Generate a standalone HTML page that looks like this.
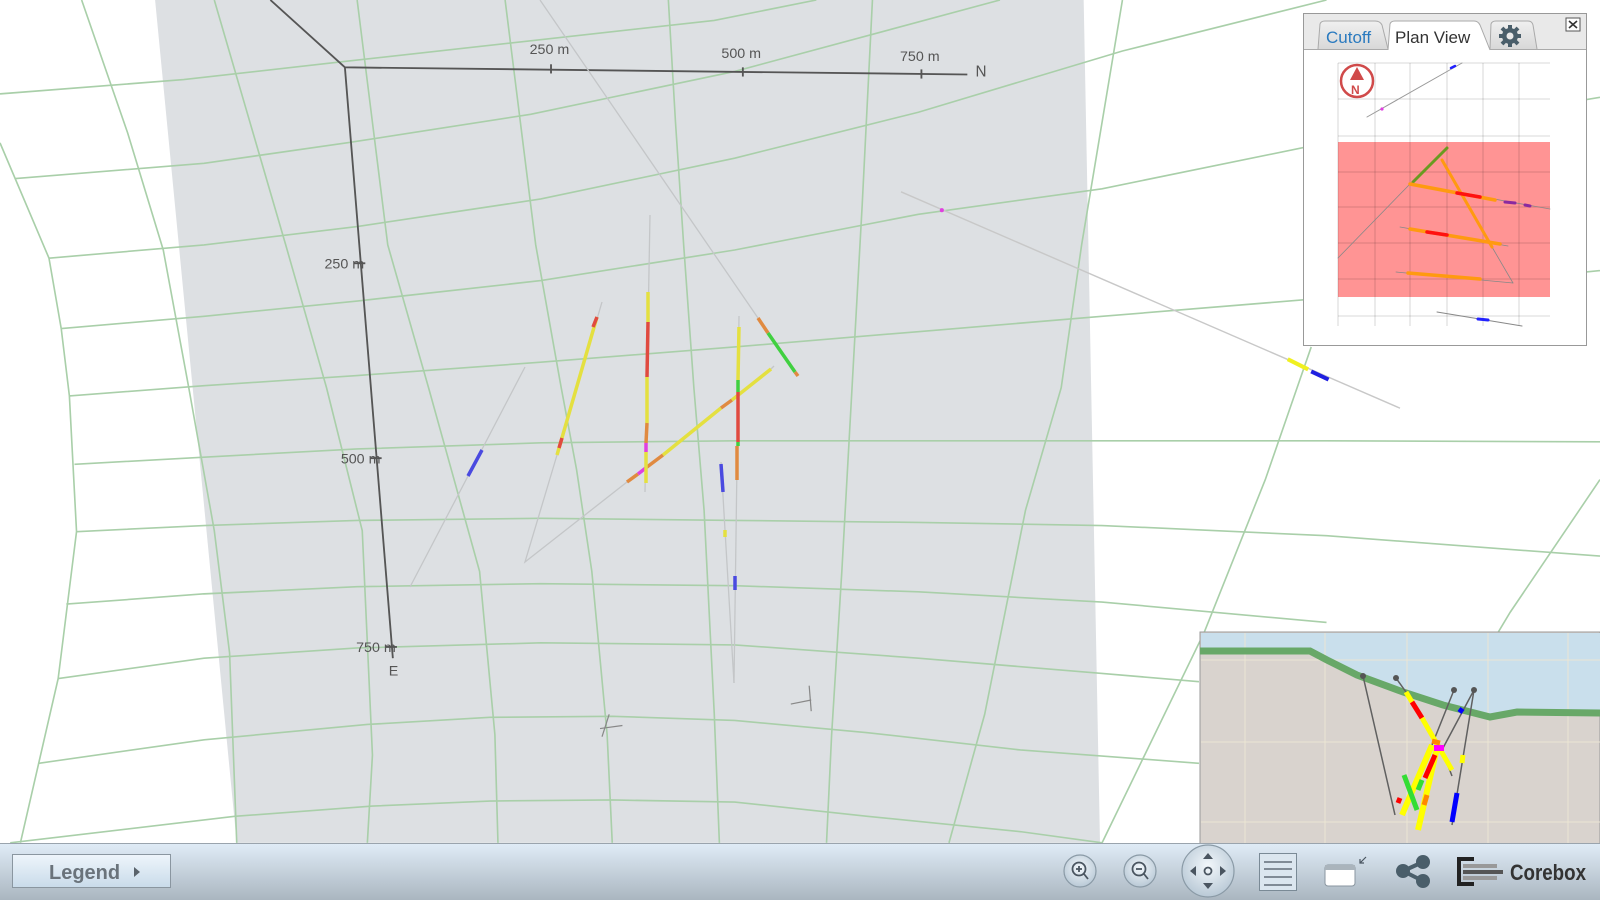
<!DOCTYPE html>
<html><head><meta charset="utf-8"><style>
html,body{margin:0;padding:0;width:1600px;height:900px;overflow:hidden;background:#fff}
svg{display:block}
text{font-family:"Liberation Sans",sans-serif}
</style></head><body>
<svg width="1600" height="900" viewBox="0 0 1600 900" xmlns="http://www.w3.org/2000/svg">
<defs>
<linearGradient id="tb" x1="0" y1="0" x2="0" y2="1"><stop offset="0" stop-color="#e0ecf7"/><stop offset="1" stop-color="#aab6c0"/></linearGradient>
<linearGradient id="btn" x1="0" y1="0" x2="0" y2="1"><stop offset="0" stop-color="#eef5fb"/><stop offset="1" stop-color="#c9dbea"/></linearGradient>
<radialGradient id="cb" cx="0.5" cy="0.4" r="0.6"><stop offset="0" stop-color="#f2f7fb"/><stop offset="1" stop-color="#b9c9d6"/></radialGradient>
<linearGradient id="tab" x1="0" y1="0" x2="0" y2="1"><stop offset="0" stop-color="#f0f0f0"/><stop offset="1" stop-color="#d8d8d8"/></linearGradient>
</defs>
<g transform="scale(1.0204)">
<polygon points="152,0 1062,0 1078,826 232,826" fill="#dde0e3"/>
<g fill="none" stroke="#a9cfa9" stroke-width="1.6">
<polyline points="0,92 180,78 340,60 520,40 700,20 800,0"/>
<polyline points="15,175 200,160 340,140 520,112 720,70 980,0"/>
<polyline points="48,253 200,240 350,222 530,195 720,155 900,110 1100,50 1300,0"/>
<polyline points="60,322 200,310 350,295 530,275 720,245 900,210 1080,185 1300,140 1600,90"/>
<polyline points="68,388 200,378 350,368 530,355 720,340 900,325 1080,310 1300,292 1600,262"/>
<polyline points="73,455 200,448 350,440 530,434 720,432 900,432 1080,432 1300,432 1568,433"/>
<polyline points="75,521 200,515 350,510 530,508 720,510 900,512 1080,515 1300,525 1568,545"/>
<polyline points="65,592 200,582 350,575 530,572 720,574 900,580 1080,590 1300,610"/>
<polyline points="57,665 200,645 350,635 530,630 720,632 900,645 1080,660 1175,668"/>
<polyline points="38,748 200,725 360,710 480,703 600,702 720,706 850,718 1000,735 1175,748"/>
<polyline points="10,826 230,800 365,790 480,785 600,784 720,786 850,800 1000,815 1080,826"/>
<polyline points="0,140 48,253 60,322 68,388 75,521 57,665 20,826"/>
<polyline points="80,0 125,130 160,245 185,380 210,520 225,640 232,826"/>
<polyline points="210,0 245,120 280,240 320,380 355,520 365,740 360,826"/>
<polyline points="350,0 365,120 380,240 420,380 445,470 470,560 485,720 488,826"/>
<polyline points="495,0 510,120 525,240 550,380 565,460 580,560 595,720 600,826"/>
<polyline points="655,0 662,120 670,240 680,380 690,500 700,700 705,826"/>
<polyline points="855,0 850,100 845,200 835,380 825,560 815,720 810,826"/>
<polyline points="1100,0 1080,120 1060,240 1040,380 1005,500 965,700 930,826"/>
<polyline points="1285,340 1240,470 1180,620 1080,826"/>
<polyline points="1568,470 1480,600 1420,700"/>
</g>
<g stroke="#555" stroke-width="1.8" fill="none">
<polyline points="265,0 338,66 948,73"/>
<polyline points="338,66 385,645"/>
<line x1="540" y1="63" x2="540" y2="72"/><line x1="728" y1="66" x2="728" y2="75"/><line x1="903" y1="68" x2="903" y2="77"/>
<line x1="347" y1="258" x2="358" y2="258"/><line x1="363" y1="449" x2="374" y2="449"/><line x1="378" y1="634" x2="389" y2="634"/>
</g>
<g fill="#555" font-size="14">
<text x="519" y="53">250 m</text><text x="707" y="57">500 m</text><text x="882" y="60">750 m</text>
<text x="956" y="75" font-size="15">N</text>
<text x="318" y="263">250 m</text><text x="334" y="454">500 m</text><text x="349" y="639">750 m</text>
<text x="381" y="662">E</text>
</g>
<g stroke="#888" stroke-width="1.2"><line x1="597" y1="700" x2="590" y2="722"/><line x1="588" y1="714" x2="610" y2="711"/><line x1="793" y1="672" x2="795" y2="697"/><line x1="775" y1="690" x2="795" y2="686"/></g>
<line x1="883" y1="188" x2="1372" y2="400" stroke="#c8c8c8" stroke-width="1.4"/>
<circle cx="923" cy="206" r="2" fill="#e040e0"/>
<line x1="1262" y1="352" x2="1282" y2="362" stroke="#f0f020" stroke-width="4"/>
<line x1="1285" y1="364" x2="1302" y2="372" stroke="#2020e0" stroke-width="4"/>
</g>
<g fill="none" stroke-linecap="butt">
<g stroke="#c4c6c8" stroke-width="1.3">
<line x1="525" y1="367" x2="410" y2="587"/>
<polyline points="602,302 557,455 525,562 627,482"/>
<line x1="650" y1="215" x2="645" y2="492"/>
<line x1="739" y1="316" x2="734" y2="683"/>
<line x1="721" y1="462" x2="734" y2="683"/>
<line x1="540" y1="0" x2="758" y2="318"/>
<line x1="771" y1="369" x2="774" y2="366"/>
</g>
<g stroke-width="3.5">
<line x1="482" y1="450" x2="468" y2="476" stroke="#4a4ae0"/>
<line x1="597" y1="317" x2="557" y2="455" stroke="#e4e040"/>
<line x1="597" y1="317" x2="593" y2="327" stroke="#e04a40"/>
<line x1="562" y1="438" x2="559" y2="448" stroke="#e04a40"/>
<line x1="627" y1="482" x2="638" y2="474" stroke="#e08a40"/>
<line x1="638" y1="474" x2="647" y2="467" stroke="#e040e0"/>
<line x1="647" y1="467" x2="663" y2="455" stroke="#e08a40"/>
<line x1="663" y1="455" x2="721" y2="408" stroke="#e4e040"/>
<line x1="721" y1="408" x2="732" y2="400" stroke="#e08a40"/>
<line x1="732" y1="400" x2="771" y2="369" stroke="#e4e040"/>
<line x1="648" y1="292" x2="648" y2="322" stroke="#e4e040"/>
<line x1="648" y1="322" x2="647" y2="377" stroke="#e04a40"/>
<line x1="647" y1="377" x2="647" y2="423" stroke="#e4e040"/>
<line x1="647" y1="423" x2="646" y2="443" stroke="#e08a40"/>
<line x1="646" y1="443" x2="646" y2="452" stroke="#e040e0"/>
<line x1="646" y1="452" x2="646" y2="483" stroke="#e4e040"/>
<line x1="739" y1="327" x2="738" y2="380" stroke="#e4e040"/>
<line x1="738" y1="380" x2="738" y2="392" stroke="#40d040"/>
<line x1="738" y1="392" x2="738" y2="442" stroke="#e04a40"/>
<line x1="738" y1="442" x2="738" y2="446" stroke="#40d040"/>
<line x1="737" y1="446" x2="737" y2="480" stroke="#e08a40"/>
<line x1="721" y1="464" x2="723" y2="492" stroke="#4a4ae0"/>
<line x1="725" y1="530" x2="725" y2="537" stroke="#e4e040"/>
<line x1="735" y1="576" x2="735" y2="590" stroke="#4a4ae0"/>
<line x1="758" y1="318" x2="768" y2="333" stroke="#e08a40"/>
<line x1="768" y1="333" x2="795" y2="372" stroke="#40d040"/>
<line x1="795" y1="372" x2="798" y2="376" stroke="#e08a40"/>
</g>
</g>
<rect x="1303.5" y="13.5" width="283" height="332" fill="#fff" stroke="#999"/>
<rect x="1304" y="14" width="282" height="36" fill="#e9e9e9"/>
<line x1="1304" y1="49.5" x2="1586" y2="49.5" stroke="#aaa"/>
<path d="M1318,49 L1320,24 Q1321,21 1325,21 L1375,21 Q1380,21 1382,25 L1388,49" fill="url(#tab)" stroke="#aaa"/>
<text x="1326" y="43" font-size="17" fill="#2a7abf">Cutoff</text>
<path d="M1388,50 L1390,24 Q1391,21 1395,21 L1474,21 Q1478,21 1480,25 L1490,50" fill="#fff" stroke="#aaa"/>
<text x="1395" y="43" font-size="17" fill="#333">Plan View</text>
<path d="M1490,49 L1491,24 Q1492,21 1496,21 L1528,21 Q1532,21 1533,25 L1537,49" fill="url(#tab)" stroke="#aaa"/>
<g transform="translate(1510,36)" fill="#4a5e6a"><circle r="8"/><g stroke="#4a5e6a" stroke-width="4"><line x1="-11" y1="0" x2="11" y2="0"/><line x1="0" y1="-11" x2="0" y2="11"/><line x1="-8" y1="-8" x2="8" y2="8"/><line x1="-8" y1="8" x2="8" y2="-8"/></g><circle r="3.5" fill="#e9e9e9"/></g>
<rect x="1566" y="18" width="14" height="13" fill="#fff" stroke="#555"/><path d="M1569,21 L1577,28 M1577,21 L1569,28" stroke="#333" stroke-width="1.6"/>
<rect x="1338" y="142" width="212" height="155" fill="#ff9494"/>
<g stroke="#000" stroke-opacity="0.12" stroke-width="1.3">
<line x1="1338" y1="63" x2="1338" y2="326"/><line x1="1375" y1="63" x2="1375" y2="326"/><line x1="1410" y1="63" x2="1410" y2="326"/><line x1="1447" y1="63" x2="1447" y2="326"/><line x1="1483" y1="63" x2="1483" y2="326"/><line x1="1519" y1="63" x2="1519" y2="326"/>
<line x1="1338" y1="63" x2="1550" y2="63"/><line x1="1338" y1="99" x2="1550" y2="99"/><line x1="1338" y1="136" x2="1550" y2="136"/><line x1="1338" y1="172" x2="1550" y2="172"/><line x1="1338" y1="207" x2="1550" y2="207"/><line x1="1338" y1="243" x2="1550" y2="243"/><line x1="1338" y1="279" x2="1550" y2="279"/><line x1="1338" y1="316" x2="1550" y2="316"/>
</g>
<circle cx="1357" cy="81" r="16" fill="none" stroke="#d04a4a" stroke-width="2.5"/>
<path d="M1357,67 L1350,80 L1364,80 Z" fill="#d04a4a"/>
<text x="1351" y="94" font-size="12" font-weight="bold" fill="#d04a4a">N</text>
<g fill="none" stroke-linecap="round">
<line x1="1367" y1="117" x2="1462" y2="63" stroke="#999" stroke-width="1"/>
<circle cx="1382" cy="109" r="1.6" fill="#e040e0" stroke="none"/>
<line x1="1451" y1="68" x2="1455" y2="66" stroke="#22f" stroke-width="2.5"/>
<line x1="1410" y1="184" x2="1338" y2="258" stroke="#888" stroke-width="0.8"/>
<line x1="1492" y1="247" x2="1513" y2="283" stroke="#888" stroke-width="0.8"/>
<line x1="1413" y1="182" x2="1447" y2="148" stroke="#6a9a20" stroke-width="3"/>
<line x1="1442" y1="160" x2="1492" y2="247" stroke="#ff9a10" stroke-width="3"/>
<line x1="1410" y1="184" x2="1550" y2="209" stroke="#888" stroke-width="0.8"/>
<line x1="1410" y1="184" x2="1495" y2="200" stroke="#ff9a10" stroke-width="3.5"/>
<line x1="1457" y1="193" x2="1480" y2="197" stroke="#ff1010" stroke-width="3.5"/>
<line x1="1505" y1="202" x2="1515" y2="203" stroke="#8a2aa0" stroke-width="3"/>
<line x1="1525" y1="205" x2="1530" y2="206" stroke="#8a2aa0" stroke-width="3"/>
<line x1="1400" y1="227" x2="1508" y2="246" stroke="#888" stroke-width="0.8"/>
<line x1="1410" y1="229" x2="1500" y2="244" stroke="#ff9a10" stroke-width="3.5"/>
<line x1="1427" y1="232" x2="1447" y2="235" stroke="#ff1010" stroke-width="3.5"/>
<line x1="1396" y1="272" x2="1513" y2="283" stroke="#888" stroke-width="0.8"/>
<line x1="1408" y1="273" x2="1480" y2="279" stroke="#ff9a10" stroke-width="3.5"/>
<line x1="1437" y1="312" x2="1522" y2="326" stroke="#888" stroke-width="1"/>
<line x1="1478" y1="319" x2="1488" y2="320" stroke="#22f" stroke-width="3"/>
</g>
<rect x="1200" y="632" width="400" height="212" fill="#d9d3ce" stroke="#999"/>
<polygon points="1201,633 1600,633 1600,713 1517,712 1490,717 1443,705 1403,692 1357,675 1327,660 1310,651 1201,651" fill="#c9dfec"/>
<g stroke="#ece6d4" stroke-width="1"><line x1="1245" y1="633" x2="1245" y2="843"/><line x1="1325" y1="633" x2="1325" y2="843"/><line x1="1407" y1="633" x2="1407" y2="843"/><line x1="1488" y1="633" x2="1488" y2="843"/><line x1="1568" y1="633" x2="1568" y2="843"/><line x1="1201" y1="660" x2="1600" y2="660"/><line x1="1201" y1="742" x2="1600" y2="742"/><line x1="1201" y1="822" x2="1600" y2="822"/></g>
<polyline points="1200,651 1310,651 1327,660 1357,675 1403,692 1443,705 1490,717 1517,712 1600,713" fill="none" stroke="#68a868" stroke-width="7"/>
<g fill="none">
<g stroke="#606060" stroke-width="1.5"><line x1="1363" y1="676" x2="1395" y2="815"/><line x1="1396" y1="678" x2="1406" y2="692"/><line x1="1454" y1="690" x2="1432" y2="745"/><line x1="1474" y1="690" x2="1443" y2="748"/><line x1="1474" y1="690" x2="1452" y2="825"/><line x1="1440" y1="745" x2="1452" y2="776"/></g>
<g fill="#555"><circle cx="1363" cy="676" r="3"/><circle cx="1396" cy="678" r="3"/><circle cx="1454" cy="690" r="3"/><circle cx="1474" cy="690" r="3"/></g>
<line x1="1406" y1="692" x2="1412" y2="702" stroke="#ff0" stroke-width="5"/>
<line x1="1412" y1="702" x2="1422" y2="718" stroke="#f00" stroke-width="5"/>
<line x1="1422" y1="718" x2="1452" y2="770" stroke="#ff0" stroke-width="5"/>
<line x1="1432" y1="745" x2="1402" y2="815" stroke="#ff0" stroke-width="6"/>
<line x1="1437" y1="748" x2="1418" y2="830" stroke="#ff0" stroke-width="6"/>
<line x1="1435" y1="755" x2="1425" y2="778" stroke="#f00" stroke-width="5"/>
<line x1="1422" y1="780" x2="1418" y2="790" stroke="#3d3" stroke-width="5"/>
<line x1="1427" y1="795" x2="1424" y2="805" stroke="#f80" stroke-width="5"/>
<line x1="1404" y1="775" x2="1417" y2="810" stroke="#3d3" stroke-width="5"/>
<line x1="1400" y1="798" x2="1398" y2="803" stroke="#f00" stroke-width="5"/>
<line x1="1434" y1="748" x2="1444" y2="748" stroke="#f0f" stroke-width="6"/>
<line x1="1432" y1="741" x2="1440" y2="743" stroke="#f80" stroke-width="5"/>
<line x1="1463" y1="755" x2="1462" y2="763" stroke="#ff0" stroke-width="5"/>
<line x1="1457" y1="793" x2="1452" y2="822" stroke="#00f" stroke-width="5"/>
<line x1="1459" y1="709" x2="1463" y2="712" stroke="#00f" stroke-width="5"/>
</g>
<!-- toolbar -->
<rect x="0" y="843" width="1600" height="57" fill="url(#tb)"/>
<line x1="0" y1="843.5" x2="1600" y2="843.5" stroke="#9aa4ad"/>
<rect x="12.5" y="854.5" width="158" height="33" fill="url(#btn)" stroke="#8a96a0"/>
<text x="49" y="879" font-size="20" font-weight="bold" fill="#6a737b">Legend</text>
<path d="M134,867 L140,872 L134,877 Z" fill="#5a636b"/>
<g stroke="#8a9aa6" stroke-width="1.2" fill="url(#cb)"><circle cx="1080" cy="871" r="16"/><circle cx="1140" cy="871" r="16"/><circle cx="1208" cy="871" r="26"/></g>
<g stroke="#4a5560" stroke-width="1.8" fill="none"><circle cx="1079" cy="869" r="6.5"/><line x1="1084" y1="874" x2="1088" y2="879"/><line x1="1076" y1="869" x2="1082" y2="869"/><line x1="1079" y1="866" x2="1079" y2="872"/>
<circle cx="1139" cy="869" r="6.5"/><line x1="1144" y1="874" x2="1148" y2="879"/><line x1="1136" y1="869" x2="1142" y2="869"/>
<circle cx="1208" cy="871" r="3.5"/></g>
<g fill="#4a5560"><path d="M1208,853 L1203,859 L1213,859Z"/><path d="M1208,889 L1203,883 L1213,883Z"/><path d="M1190,871 L1196,866 L1196,876Z"/><path d="M1226,871 L1220,866 L1220,876Z"/></g>
<rect x="1259.5" y="853.5" width="37" height="37" fill="#dbe6ef" stroke="#7a8a96"/>
<g stroke="#4a5560" stroke-width="1.3"><line x1="1264" y1="862" x2="1292" y2="862"/><line x1="1264" y1="869" x2="1292" y2="869"/><line x1="1264" y1="877" x2="1292" y2="877"/><line x1="1264" y1="885" x2="1292" y2="885"/></g>
<rect x="1325" y="865" width="30" height="21" rx="3" fill="#fff" stroke="#8a96a0"/><rect x="1325" y="865" width="30" height="5" fill="#aab4bc"/>
<path d="M1366,857 L1360,863 M1360,859 L1360,863 L1364,863" stroke="#4a5560" fill="none" stroke-width="1.2"/>
<g fill="#4a5e6a"><circle cx="1423" cy="862" r="7"/><circle cx="1403" cy="871" r="7"/><circle cx="1423" cy="881" r="7"/></g>
<path d="M1423,862 L1403,871 L1423,881" stroke="#4a5e6a" stroke-width="4" fill="none"/>
<path d="M1457,857 L1474,857 L1474,861 L1461,861 L1461,882 L1474,882 L1474,886 L1457,886Z" fill="#222"/>
<rect x="1463" y="864" width="34" height="4" fill="#999"/><rect x="1463" y="870" width="40" height="4" fill="#555"/><rect x="1463" y="876" width="34" height="4" fill="#999"/>
<text x="1510" y="880" font-size="22" font-weight="bold" fill="#333" textLength="76" lengthAdjust="spacingAndGlyphs">Corebox</text>
</svg>
</body></html>
